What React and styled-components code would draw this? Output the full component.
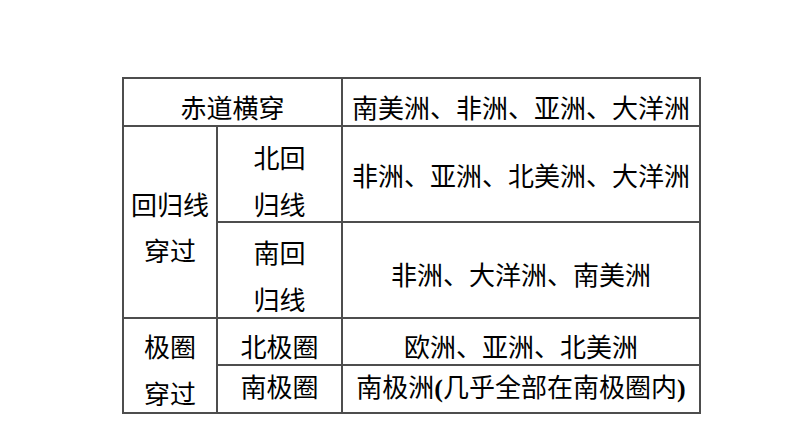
import React from 'react';
import styled, { createGlobalStyle } from 'styled-components';

const GlobalStyle = createGlobalStyle`
    html, body {
        margin: 0;
        padding: 0;
        background: #ffffff;
    }
    body {
        font-family: "Liberation Serif", "Noto Sans CJK SC", serif;
    }
`;

const Page = styled.div`
    width: 794px;
    height: 447px;
    box-sizing: border-box;
    padding: 77px 0 0 122px;
`;

const Table = styled.table`
    border-collapse: collapse;
    table-layout: fixed;
    width: 577px;
    color: #000000;
    font-size: 26px;
    font-weight: 400;
`;

const Row = styled.tr`
    height: ${(p) => p.$h}px;
`;

// $shift pushes the text down: content is centred in what is left below the padding
const Cell = styled.td`
    border: 2px solid #4d4d4d;
    padding: ${(p) => p.$shift || 0}px 0 0;
    text-align: center;
    vertical-align: middle;
    line-height: 30px;
    white-space: nowrap;
`;

// two stacked lines, 47px apart from centre to centre
const Lines = styled.div`
    display: flex;
    flex-direction: column;
    align-items: center;
    gap: ${(p) => p.$gap || 21}px;
    line-height: 26px;
`;

const Paren = styled.span`
    font-family: "Liberation Serif", serif;
    font-weight: bold;
`;

const tropics = [
    { label: '北回', label2: '归线', text: '非洲、亚洲、北美洲、大洋洲', shift: 19, textShift: 8 },
    { label: '南回', label2: '归线', text: '非洲、大洋洲、南美洲', shift: 17, textShift: 14 },
];

export default function App() {
    return (
        <Page>
            <GlobalStyle />
            <Table>
                <colgroup>
                    <col style={{ width: 94 }} />
                    <col style={{ width: 125 }} />
                    <col style={{ width: 358 }} />
                </colgroup>
                <tbody>
                    <Row $h={48}>
                        <Cell colSpan={2} $shift={16}>赤道横穿</Cell>
                        <Cell $shift={16}>南美洲、非洲、亚洲、大洋洲</Cell>
                    </Row>
                    {tropics.map((r, i) => (
                        <Row $h={96} key={r.label}>
                            {i === 0 && (
                                <Cell rowSpan={2} $shift={16}>
                                    <Lines $gap={20}>
                                        <span>回归线</span>
                                        <span>穿过</span>
                                    </Lines>
                                </Cell>
                            )}
                            <Cell $shift={r.shift}>
                                <Lines>
                                    <span>{r.label}</span>
                                    <span>{r.label2}</span>
                                </Lines>
                            </Cell>
                            <Cell $shift={r.textShift}>{r.text}</Cell>
                        </Row>
                    ))}
                    <Row $h={47}>
                        <Cell rowSpan={2} $shift={14}>
                            <Lines>
                                <span>极圈</span>
                                <span>穿过</span>
                            </Lines>
                        </Cell>
                        <Cell $shift={15}>北极圈</Cell>
                        <Cell $shift={15}>欧洲、亚洲、北美洲</Cell>
                    </Row>
                    <Row $h={48}>
                        <Cell>南极圈</Cell>
                        <Cell>
                            南极洲<Paren>(</Paren>几乎全部在南极圈内<Paren>)</Paren>
                        </Cell>
                    </Row>
                </tbody>
            </Table>
        </Page>
    );
}
